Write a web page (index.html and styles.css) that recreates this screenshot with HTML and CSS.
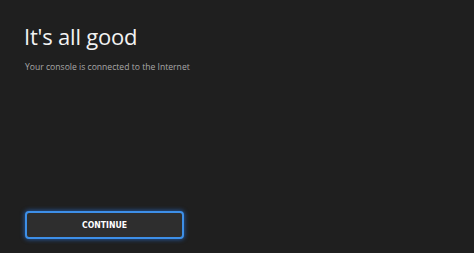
FILE: index.html
```html
<!DOCTYPE html>
<html>
<head>
<meta charset="utf-8">
<link rel="stylesheet" href="styles.css">
</head>
<body>
<main class="screen">
  <header class="intro">
    <h1 class="title">It's all good</h1>
    <p class="subtitle">Your console is connected to the Internet</p>
  </header>
  <button class="continue">CONTINUE</button>
</main>
</body>
</html>
```
FILE: styles.css
```css
html, body {
  margin: 0;
  padding: 0;
  background: #1f1f1f;
  width: 474px;
  height: 253px;
  overflow: hidden;
}
.screen {
  box-sizing: border-box;
  height: 253px;
  padding: 22px 0 0 24px;
  display: flex;
  flex-direction: column;
  font-family: "Open Sans", "Noto Sans", sans-serif;
}
.title {
  margin: 0;
  font-weight: 400;
  font-size: 22px;
  line-height: 28px;
  color: #f2f2f2;
  letter-spacing: -0.2px;
}
.subtitle {
  margin: 10px 0 0 1px;
  font-size: 8.6px;
  line-height: 14px;
  color: #a8a8a8;
}
.continue {
  margin-top: auto;
  margin-bottom: 14px;
  margin-left: 1px;
  width: 159px;
  height: 28px;
  box-sizing: border-box;
  border: 2px solid #3d8fe8;
  border-radius: 4px;
  background: #2e2e2e;
  box-shadow: 0 0 4px 1px rgba(40, 120, 230, 0.55);
  color: #ffffff;
  font-family: "DejaVu Sans Condensed", "DejaVu Sans", sans-serif;
  font-weight: 700;
  font-size: 8.6px;
  letter-spacing: 0;
  padding: 0;
}
```
